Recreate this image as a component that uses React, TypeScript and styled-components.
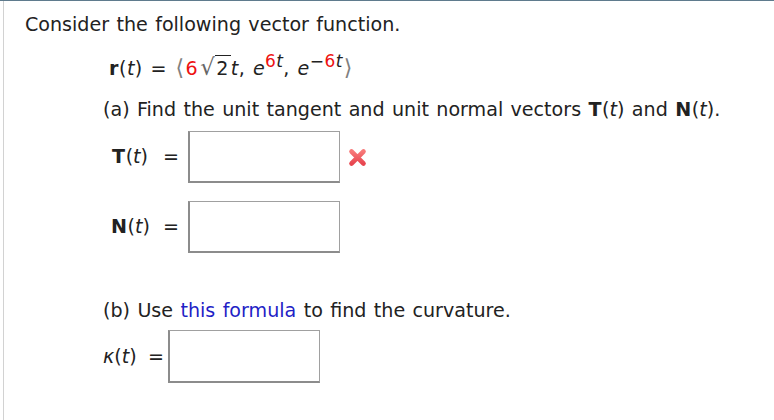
import React from 'react';
import styled, { createGlobalStyle } from 'styled-components';

const Global = createGlobalStyle`
  html, body {
    margin: 0;
    padding: 0;
    background: #fff;
  }
  body {
    font-family: "DejaVu Sans", Verdana, sans-serif;
    font-size: 19.1px;
    word-spacing: 1.3px;
    color: #222;
  }
`;

const Page = styled.div`
  width: 774px;
  height: 420px;
  border-top: 1px solid #5f7b8d;
  box-sizing: border-box;
  overflow: hidden;
`;

const Panel = styled.div`
  margin-left: 3px;
  height: 100%;
  border-left: 1px solid #d2d2d2;
  padding: 13px 0 0 21px;
  box-sizing: border-box;
`;

const Line = styled.div<{ $top: number; $indent?: number }>`
  margin-top: ${(p) => p.$top}px;
  margin-left: ${(p) => p.$indent ?? 0}px;
  line-height: 22px;
  height: 22px;
  white-space: nowrap;
`;

const Formula = styled.div`
  margin-top: 18px;
  margin-left: 84px;
  line-height: 26px;
  height: 26px;
  white-space: nowrap;
  letter-spacing: 0.4px;
`;

const Bold = styled.b`
  font-weight: bold;
  letter-spacing: 0.6px;
`;

const Var = styled.i`
  font-style: italic;
`;

const Red = styled.span`
  color: #ee1111;
`;

const Sup = styled.sup`
  font-size: 17px;
  vertical-align: 8px;
  line-height: 0;
`;

const Bracket = styled.span`
  color: #808080;
  font-size: 22px;
  margin: 0 1px;
`;

const Radical = styled.span`
  color: #666;
  font-size: 23px;
  margin-left: 2px;
`;

const Under = styled.span`
  border-top: 1px solid #222;
  padding: 1px 2px 0 1px;
`;

const Link = styled.a`
  color: #1f1fc6;
  text-decoration: none;
`;

const Row = styled.div<{ $top: number; $indent: number }>`
  display: flex;
  align-items: center;
  margin-top: ${(p) => p.$top}px;
  margin-left: ${(p) => p.$indent}px;
`;

const Label = styled.span<{ $width: number }>`
  width: ${(p) => p.$width}px;
  white-space: nowrap;
  line-height: 22px;
`;

const Equals = styled.span<{ $gap: number }>`
  margin-right: ${(p) => p.$gap}px;
  line-height: 22px;
`;

const AnswerBox = styled.input<{ $h: number }>`
  width: 152px;
  height: ${(p) => p.$h}px;
  box-sizing: border-box;
  border: 1px solid #a0a0a0;
  border-left: 2px solid #8c8c8c;
  border-bottom: 2px solid #8c8c8c;
  background: #fff;
  padding: 0;
  margin: 0;
  outline: none;
`;

const Wrong = styled.svg`
  margin-left: 8px;
  width: 19px;
  height: 19px;
`;

function CrossMark() {
  return (
    <Wrong viewBox="0 0 19 19">
      <defs>
        <linearGradient id="xg" x1="0" y1="0" x2="0" y2="1">
          <stop offset="0" stopColor="#f77878" />
          <stop offset="1" stopColor="#e84650" />
        </linearGradient>
      </defs>
      <path
        d="M3.5 3.5 L15.5 15.5 M15.5 3.5 L3.5 15.5"
        stroke="url(#xg)"
        strokeWidth="4.6"
        strokeLinecap="round"
        fill="none"
      />
    </Wrong>
  );
}

export default function App() {
  return (
    <>
      <Global />
      <Page>
        <Panel>
          <Line $top={0}>Consider the following vector function.</Line>
          <Formula>
            <Bold>r</Bold>(<Var>t</Var>) = <Bracket>⟨</Bracket>
            <Red>6</Red>
            <Radical>√</Radical>
            <Under>2</Under>
            <Var>t</Var>, <Var>e</Var>
            <Sup>
              <Red>6</Red>
              <Var>t</Var>
            </Sup>
            , <Var>e</Var>
            <Sup>
              −<Red>6</Red>
              <Var>t</Var>
            </Sup>
            <Bracket>⟩</Bracket>
          </Formula>
          <Line $top={19} $indent={78}>
            (a) Find the unit tangent and unit normal vectors <Bold>T</Bold>(<Var>t</Var>) and{' '}
            <Bold>N</Bold>(<Var>t</Var>).
          </Line>
          <Row $top={10} $indent={87}>
            <Label $width={51}>
              <Bold>T</Bold>(<Var>t</Var>)
            </Label>
            <Equals $gap={9}>=</Equals>
            <AnswerBox $h={52} />
            <CrossMark />
          </Row>
          <Row $top={18} $indent={86}>
            <Label $width={52}>
              <Bold>N</Bold>(<Var>t</Var>)
            </Label>
            <Equals $gap={9}>=</Equals>
            <AnswerBox $h={52} />
          </Row>
          <Line $top={47} $indent={78}>
            (b) Use <Link href="#">this formula</Link> to find the curvature.
          </Line>
          <Row $top={8} $indent={78}>
            <Label $width={45}>
              <Var>κ</Var>(<Var>t</Var>)
            </Label>
            <Equals $gap={4}>=</Equals>
            <AnswerBox $h={53} />
          </Row>
        </Panel>
      </Page>
    </>
  );
}
